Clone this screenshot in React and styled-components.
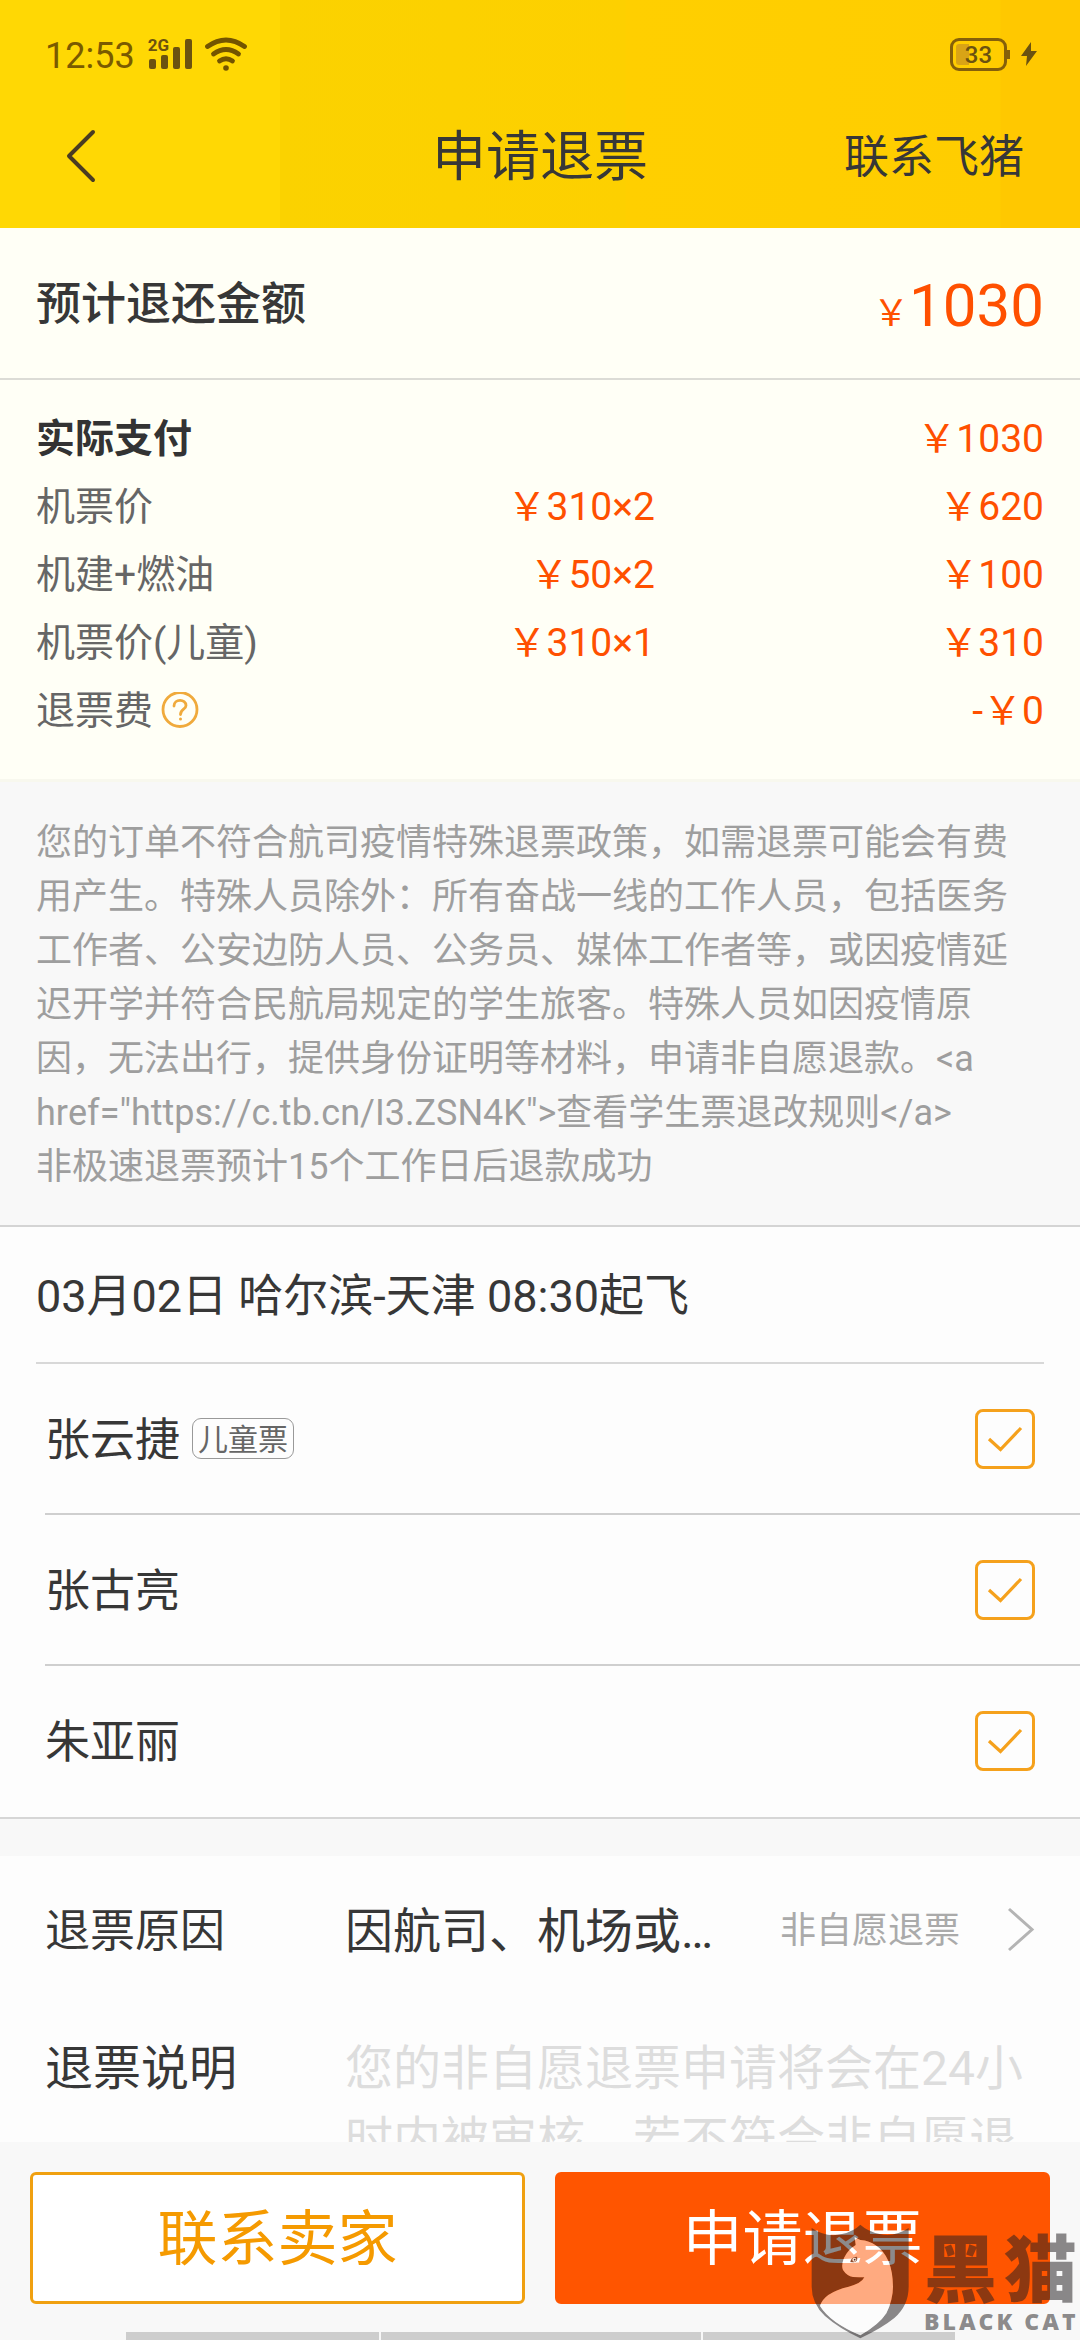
import React from 'react'
import styled, { createGlobalStyle } from 'styled-components'

const fees = [
  { label: '机票价', unit: '¥310×2', total: '¥620' },
  { label: '机建+燃油', unit: '¥50×2', total: '¥100' },
  { label: '机票价(儿童)', unit: '¥310×1', total: '¥310' },
  { label: '退票费', help: true, total: '-¥0' },
]

const notice = [
  '您的订单不符合航司疫情特殊退票政策，如需退票可能会有费',
  '用产生。特殊人员除外：所有奋战一线的工作人员，包括医务',
  '工作者、公安边防人员、公务员、媒体工作者等，或因疫情延',
  '迟开学并符合民航局规定的学生旅客。特殊人员如因疫情原',
  '因，无法出行，提供身份证明等材料，申请非自愿退款。<a',
  'href="https://c.tb.cn/I3.ZSN4K">查看学生票退改规则</a>',
  '非极速退票预计15个工作日后退款成功',
]

const passengers = [
  { name: '张云捷', tag: '儿童票' },
  { name: '张古亮' },
  { name: '朱亚丽' },
]

// prices use the full-width yen sign
const yen = (text) => text && text.replace('¥', '￥')

const App = () => {
  return (
    <Page>
      <GlobalStyle />
      <Header>
        <StatusBar>
          <StatusGroup>
            <Clock>12:53</Clock>
            <Signal />
            <Wifi />
          </StatusGroup>
          <StatusGroup>
            <Battery>33</Battery>
            <Bolt />
          </StatusGroup>
        </StatusBar>
        <NavBar>
          <BackIcon />
          <Title>申请退票</Title>
          <Contact>联系飞猪</Contact>
        </NavBar>
      </Header>

      <RefundTotal>
        <span>预计退还金额</span>
        <Amount>
          <small>￥</small>1030
        </Amount>
      </RefundTotal>

      <FeeList>
        <FeeRow $bold>
          <FeeLabel>实际支付</FeeLabel>
          <Unit />
          <Price>{yen('¥1030')}</Price>
        </FeeRow>
        {fees.map((fee) => (
          <FeeRow key={fee.label}>
            <FeeLabel>
              {fee.label}
              {fee.help && <HelpIcon />}
            </FeeLabel>
            <Unit>{yen(fee.unit)}</Unit>
            <Price>{yen(fee.total)}</Price>
          </FeeRow>
        ))}
      </FeeList>

      <Notice>
        {notice.map((line) => (
          <p key={line}>{line}</p>
        ))}
      </Notice>

      <Trip>
        <TripTitle>03月02日 哈尔滨-天津 08:30起飞</TripTitle>
        {passengers.map((item) => (
          <Passenger key={item.name}>
            <Name>{item.name}</Name>
            {item.tag && <Tag>{item.tag}</Tag>}
            <CheckBox>
              <CheckIcon />
            </CheckBox>
          </Passenger>
        ))}
      </Trip>

      <Form>
        <FormRow>
          <FormLabel>退票原因</FormLabel>
          <Reason>因航司、机场或…</Reason>
          <ReasonType>非自愿退票</ReasonType>
          <ArrowIcon />
        </FormRow>
        <FormRow $top>
          <FormLabel $large>退票说明</FormLabel>
          <Placeholder>
            您的非自愿退票申请将会在24小
            <br />
            时内被审核，若不符合非自愿退
          </Placeholder>
        </FormRow>
      </Form>

      <Footer>
        <Actions>
          <Button>联系卖家</Button>
          <Button $primary>申请退票</Button>
        </Actions>
        <Gestures>
          <i />
          <i />
          <i />
        </Gestures>
      </Footer>

      <Watermark>
        <CatShield />
        <Brand>
          <strong>黑猫</strong>
          <em>BLACK CAT</em>
        </Brand>
      </Watermark>
    </Page>
  )
}

export default App

const Signal = () => (
  <SignalBox>
    <svg width='44' height='32' viewBox='0 0 44 32' fill='#6b5210'>
      <rect x='1' y='21' width='7' height='10' rx='2' />
      <rect x='13' y='17' width='7' height='14' rx='2' />
      <rect x='25' y='9' width='7' height='22' rx='2' />
      <rect x='37' y='1' width='7' height='30' rx='2' />
    </svg>
    <b>2G</b>
  </SignalBox>
)

const Wifi = () => (
  <svg width='42' height='34' viewBox='0 0 42 34' fill='none' stroke='#735400' strokeWidth='4.8' strokeLinecap='round'>
    <path d='M2.500 9.500 Q21 -3.500 39.500 9.500' />
    <path d='M8.500 17 Q21 8 33.500 17' />
    <path d='M14.500 24 Q21 19.500 27.500 24' />
    <circle cx='21' cy='31' r='2.800' fill='#735400' stroke='none' />
  </svg>
)

const Bolt = () => (
  <svg width='18' height='26' viewBox='0 0 18 26' fill='#6b5210'>
    <path d='M11 1 L1 15 H7 L6 25 L17 10 H11 Z' />
  </svg>
)

const BackIcon = () => (
  <svg width='32' height='56' viewBox='0 0 32 56' fill='none' stroke='#4a3c22' strokeWidth='4' strokeLinecap='round' strokeLinejoin='round'>
    <path d='M28 4 L4 28 L28 52' />
  </svg>
)

const HelpIcon = () => (
  <svg width='38' height='38' viewBox='0 0 38 38' fill='none' stroke='#f0aa3c' strokeWidth='2.800' strokeLinecap='round'>
    <circle cx='19' cy='17.500' r='17' />
    <path d='M13 14 C13 6.500 25 6.500 25 13.500 C25 17.500 19.500 17 19.500 22.500' />
    <circle cx='19.500' cy='27' r='1.500' fill='#f0aa3c' stroke='none' />
  </svg>
)

const CheckIcon = () => (
  <svg width='38' height='28' viewBox='0 0 38 28' fill='none' stroke='#f5a11c' strokeWidth='3.200'>
    <path d='M3 14 L14.500 24.500 L35 3' />
  </svg>
)

const ArrowIcon = () => (
  <svg width='28' height='50' viewBox='0 0 28 50' fill='none' stroke='#b4b4b4' strokeWidth='3'>
    <path d='M2 2 L25 22.500 L2 43' />
  </svg>
)

const CatShield = () => (
  <svg width='100' height='116' viewBox='89 74 300 348'>
    <path
      fill='#231f20'
      fillOpacity='0.52'
      fillRule='evenodd'
      d='M94 86 Q138 116 185 104 Q220 96 240 76 Q262 96 298 104 Q342 114 385 86 V262 Q385 318 342 356 Q305 386 240 417 Q175 386 134 350 Q94 312 94 262 Z
         M223 114 L226 137 Q202 152 191 176 Q182 198 188 212 Q200 230 218 233 Q238 234 252 234 Q244 252 205 262 Q130 280 119 320 Q150 370 240 408 Q296 376 318 342 Q338 300 338 262 Q337 172 286 138 Q268 124 240 122 Z'
    />
    <path
      fill='#fff'
      fillOpacity='0.5'
      d='M223 114 L226 137 Q202 152 191 176 Q182 198 188 212 Q200 230 218 233 Q238 234 252 234 Q244 252 205 262 Q130 280 119 320 Q150 370 240 408 Q296 376 318 342 Q338 300 338 262 Q337 172 286 138 Q268 124 240 122 Z'
    />
    <path fill='#8c4a2c' d='M210 188 Q211 173 230 172 Q234 186 220 189 Z' />
    <circle cx='222' cy='181' r='6' fill='#ffe3d2' />
    <circle cx='223' cy='181' r='2.500' fill='#4a3027' />
  </svg>
)

const GlobalStyle = createGlobalStyle`
  * {
    box-sizing: border-box;
  }
  body {
    margin: 0;
    font-family: Roboto, 'Noto Sans CJK SC', sans-serif;
    font-kerning: none;
    line-height: 1.2;
    color: #373737;
  }
  p {
    margin: 0;
  }
  svg {
    display: block;
    flex-shrink: 0;
  }
`
const Page = styled.div`
  position: relative;
  display: flex;
  flex-direction: column;
  width: 1080px;
  height: 2340px;
  overflow: hidden;
  background: #f8f8f8;
  white-space: nowrap;
`
const Header = styled.header`
  height: 228px;
  background: linear-gradient(
    90deg,
    #ffd804 280px,
    #fbd200 280px,
    #fdd000 625px,
    #ffcf00 626px,
    #ffcd00 1000px,
    #ffc800 1001px
  );
`
const StatusBar = styled.div`
  display: flex;
  justify-content: space-between;
  height: 108px;
  padding: 0 42px 0 45px;
`
const StatusGroup = styled.div`
  display: flex;
  align-items: center;
  gap: 13px;
`
const Clock = styled.span`
  font-size: 36px;
  line-height: 108px;
  color: #7a5a00;
  padding-top: 3px;
`
const SignalBox = styled.div`
  position: relative;
  b {
    position: absolute;
    top: -3px;
    left: 0;
    font-size: 17px;
    line-height: 20px;
    color: #6b5210;
  }
`
const Battery = styled.div`
  position: relative;
  width: 57px;
  height: 33px;
  border: 3px solid #85600a;
  border-radius: 9px;
  background: linear-gradient(90deg, #d9a416 16px, transparent 16px);
  background-clip: content-box;
  padding: 3px;
  font-size: 24px;
  font-weight: 500;
  line-height: 22px;
  text-align: center;
  color: #6b5210;
  &:after {
    content: '';
    position: absolute;
    right: -6px;
    top: 9px;
    width: 3px;
    height: 9px;
    background: #85600a;
  }
`
const NavBar = styled.div`
  display: grid;
  grid-template-columns: 1fr auto 1fr;
  align-items: center;
  height: 96px;
  padding: 0 56px 0 65px;
`
const Title = styled.h1`
  margin: 0 9px 0 0;
  padding-top: 4px;
  font-size: 54px;
  font-weight: 400;
`
const Contact = styled.span`
  justify-self: end;
  padding-top: 3px;
  font-size: 45px;
`
const RefundTotal = styled.section`
  display: flex;
  justify-content: space-between;
  align-items: center;
  height: 152px;
  padding: 4px 36px 0;
  background: #fffff6;
  border-bottom: 2px solid #dcdcd6;
  font-size: 45px;
  font-weight: 500;
`
const Amount = styled.div`
  padding-top: 1px;
  color: #ff5000;
  font-size: 60px;
  font-weight: 400;
  small {
    font-size: 36px;
  }
`
const FeeList = styled.section`
  height: 402px;
  padding: 25px 36px 0;
  background: #fffff6;
  border-bottom: 3px solid #f8f8ee;
`
const FeeRow = styled.div`
  display: grid;
  grid-template-columns: 320px 299px 1fr;
  height: 68px;
  font-size: 39px;
  line-height: 68px;
  color: ${({ $bold }) => ($bold ? '#333' : '#666')};
  ${({ $bold }) => $bold && 'div { font-weight: 700; }'}
`
const FeeLabel = styled.div`
  display: flex;
  align-items: center;
  gap: 8px;
`
const Unit = styled.span`
  text-align: right;
  color: #ff5000;
`
const Price = styled(Unit)``

const Notice = styled.section`
  height: 445px;
  padding: 34px 36px 0;
  border-bottom: 2px solid #d4d4d4;
  font-size: 36px;
  line-height: 54px;
  color: #9e9e9e;
`
const Trip = styled.section`
  height: 592px;
  background: #fdfdfd;
  border-bottom: 2px solid #d6d6d6;
`
const TripTitle = styled.div`
  height: 137px;
  margin: 0 36px;
  padding-top: 2px;
  border-bottom: 2px solid #d8d8d8;
  font-size: 45px;
  line-height: 136px;
`
const Passenger = styled.div`
  display: flex;
  align-items: center;
  height: 151px;
  margin-left: 45px;
  padding-right: 45px;
  border-bottom: 2px solid #cfcfcf;
  &:last-child {
    border-color: transparent;
  }
`
const Name = styled.span`
  padding-top: 5px;
  font-size: 45px;
`
const Tag = styled.span`
  height: 41px;
  margin-left: 12px;
  padding: 0 5px;
  border: 1px solid #999;
  border-radius: 9px;
  font-size: 30px;
  line-height: 42px;
  color: #666;
`
const CheckBox = styled.div`
  display: flex;
  align-items: center;
  justify-content: center;
  width: 60px;
  height: 60px;
  margin-left: auto;
  border: 3px solid #f5a11c;
  border-radius: 8px;
`
const Form = styled.section`
  height: 286px;
  margin-top: 37px;
  padding: 0 45px;
  overflow: hidden;
  background: #fdfdfd;
`
const FormRow = styled.div`
  display: flex;
  align-items: ${({ $top }) => ($top ? 'flex-start' : 'center')};
  height: ${({ $top }) => ($top ? '144px' : '150px')};
  padding-top: ${({ $top }) => ($top ? '27px' : '2px')};
`
const FormLabel = styled.span`
  width: 300px;
  font-size: ${({ $large }) => ($large ? '48px' : '45px')};
  line-height: 72px;
`
const Reason = styled.span`
  flex: 1;
  font-size: 48px;
`
const ReasonType = styled.span`
  margin-right: 47px;
  font-size: 36px;
  color: #aaa;
`
const Placeholder = styled.p`
  font-size: 48px;
  line-height: 71px;
  color: #ddd;
`
const Footer = styled.footer`
  display: flex;
  flex-direction: column;
  justify-content: space-between;
  flex: 1;
  padding-top: 30px;
`
const Actions = styled.div`
  display: grid;
  grid-template-columns: 1fr 1fr;
  gap: 30px;
  padding: 0 30px;
`
const Button = styled.button`
  height: 132px;
  padding: 4px 0 0;
  border: 3px solid ${({ $primary }) => ($primary ? '#ff5500' : '#f0a010')};
  border-radius: 6px;
  background: ${({ $primary }) => ($primary ? '#ff5500' : '#fff')};
  color: ${({ $primary }) => ($primary ? '#fff' : '#f59a00')};
  font-family: inherit;
  font-size: 60px;
  line-height: 72px;
`
const Gestures = styled.div`
  display: grid;
  grid-template-columns: 253px 320px 252px;
  gap: 2px;
  height: 8px;
  padding-left: 126px;
  i {
    background: #cdcdcd;
  }
`
const Watermark = styled.div`
  position: absolute;
  left: 810px;
  top: 2224px;
  display: flex;
  color: rgba(35, 31, 32, 0.52);
`
const Brand = styled.div`
  margin-left: 14px;
  strong {
    display: block;
    margin-top: 3px;
    font-family: 'Noto Sans CJK SC', sans-serif;
    font-size: 73px;
    font-weight: 900;
    line-height: 74px;
    letter-spacing: 7px;
  }
  em {
    display: block;
    margin-top: 6px;
    font-family: 'Open Sans', sans-serif;
    font-style: normal;
    font-size: 23px;
    font-weight: 800;
    line-height: 28px;
    letter-spacing: 3px;
  }
`
